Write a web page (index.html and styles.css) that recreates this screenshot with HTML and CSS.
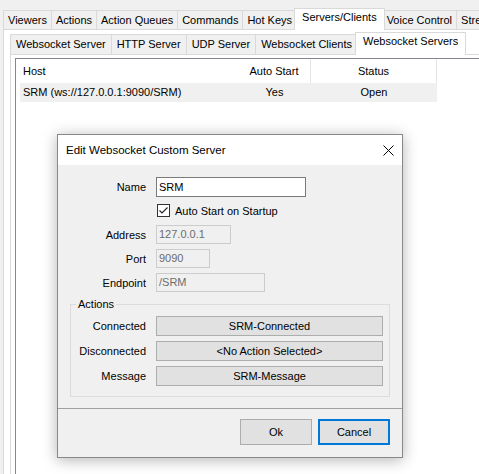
FILE: index.html
```html
<!DOCTYPE html>
<html lang="en">

<head>
    <meta charset="UTF-8">
    <title>Servers/Clients - Websocket Servers</title>
    <link rel="stylesheet" href="styles.css">
</head>

<body>
    <div class="app">
        <div class="tab-strip main-tabs">
            <div class="tab">Viewers</div>
            <div class="tab">Actions</div>
            <div class="tab">Action Queues</div>
            <div class="tab">Commands</div>
            <div class="tab">Hot Keys</div>
            <div class="tab active">Servers/Clients</div>
            <div class="tab">Voice Control</div>
            <div class="tab">Stream Apps</div>
        </div>
        <div class="main-page">
            <div class="tab-strip sub-tabs">
                <div class="tab">Websocket Server</div>
                <div class="tab">HTTP Server</div>
                <div class="tab">UDP Server</div>
                <div class="tab">Websocket Clients</div>
                <div class="tab active">Websocket Servers</div>
            </div>
            <div class="sub-page">
                <div class="list-view">
                    <div class="list-header">
                        <div class="col col-host">Host</div>
                        <div class="col col-auto">Auto Start</div>
                        <div class="col col-status">Status</div>
                    </div>
                    <div class="list-row">
                        <div class="col col-host">SRM (ws://127.0.0.1:9090/SRM)</div>
                        <div class="col col-auto">Yes</div>
                        <div class="col col-status">Open</div>
                    </div>
                </div>
            </div>
        </div>

        <!-- modal dialog -->
        <div class="dialog">
            <div class="dialog-title">
                <span>Edit Websocket Custom Server</span>
                <svg class="close-icon" width="11" height="11" viewBox="0 0 11 11">
                    <path d="M0.5 0.5 L10.5 10.5 M10.5 0.5 L0.5 10.5" stroke="#000" stroke-width="1" fill="none" />
                </svg>
            </div>
            <div class="dialog-body">
                <div class="form-row">
                    <span class="form-label">Name</span>
                    <div class="textbox name-box">SRM</div>
                </div>
                <div class="form-row check-row">
                    <span class="checkbox">
                        <svg width="11" height="11" viewBox="0 0 11 11">
                            <path d="M1.5 5.5 L4 8 L9.5 2.5" stroke="#222" stroke-width="1.1" fill="none" />
                        </svg>
                    </span>
                    <span>Auto Start on Startup</span>
                </div>
                <div class="form-row gap-lg">
                    <span class="form-label">Address</span>
                    <div class="textbox disabled address-box">127.0.0.1</div>
                </div>
                <div class="form-row gap-sm">
                    <span class="form-label">Port</span>
                    <div class="textbox disabled port-box">9090</div>
                </div>
                <div class="form-row gap-sm">
                    <span class="form-label">Endpoint</span>
                    <div class="textbox disabled endpoint-box">/SRM</div>
                </div>
                <fieldset class="group">
                    <legend>Actions</legend>
                    <div class="action-row">
                        <span class="action-label">Connected</span>
                        <div class="action-btn">SRM-Connected</div>
                    </div>
                    <div class="action-row">
                        <span class="action-label">Disconnected</span>
                        <div class="action-btn">&lt;No Action Selected&gt;</div>
                    </div>
                    <div class="action-row">
                        <span class="action-label">Message</span>
                        <div class="action-btn">SRM-Message</div>
                    </div>
                </fieldset>
            </div>
            <div class="dialog-footer">
                <button class="btn">Ok</button>
                <button class="btn btn-default">Cancel</button>
            </div>
        </div>
    </div>
</body>

</html>
```

FILE: styles.css
```css
* {
    box-sizing: border-box;
}

body {
    margin: 0;
    padding: 0;
    background: #f0f0f0;
    font-family: "Liberation Sans", Arial, sans-serif;
    font-size: 11px;
    color: #000;
}

.app {
    position: relative;
    width: 479px;
    height: 474px;
    overflow: hidden;
    display: flex;
    flex-direction: column;
    background: #f0f0f0;
}

/* tabs */
.tab-strip {
    display: flex;
    align-items: flex-end;
    flex: none;
}

.main-tabs {
    height: 29px;
    padding-left: 3px;
}

.sub-tabs {
    height: 24px;
}

.tab {
    flex: none;
    height: 19px;
    line-height: 18px;
    padding: 0 5px;
    margin-right: -1px;
    border: 1px solid #d9d9d9;
    border-bottom: none;
    background: #f0f0f0;
    white-space: nowrap;
}

.main-tabs .tab {
    padding: 0 4px;
}

.sub-tabs .tab {
    height: 20px;
}

.tab.active {
    position: relative;
    z-index: 1;
    height: 22px;
    line-height: 17px;
    padding: 0 7px;
    margin: 0 -3px -1px -2px;
    background: #fff;
}

.main-tabs .tab.active {
    padding: 0 7px;
}

.sub-tabs .tab.active {
    height: 23px;
}

.main-page {
    flex: 1;
    display: flex;
    flex-direction: column;
    margin: 0 -20px -20px 3px;
    padding-left: 6px;
    border: 1px solid #d9d9d9;
    background: #fff;
}

.sub-page {
    flex: 1;
    display: flex;
    flex-direction: column;
    padding: 3px 0 0 4px;
    border: 1px solid #d9d9d9;
    background: #fff;
}

/* list view */
.list-view {
    flex: 1;
    padding-left: 4px;
    border: 1px solid #828790;
    background: #fff;
}

.list-header,
.list-row {
    display: flex;
}

.list-header {
    height: 24px;
    line-height: 24px;
}

.list-row {
    width: 417px;
    height: 19px;
    line-height: 19px;
    background: #f0f0f0;
}

.col {
    white-space: nowrap;
}

.col-host {
    width: 218px;
    padding-left: 3px;
}

.col-auto {
    width: 73px;
    text-align: center;
}

.col-status {
    width: 126px;
    text-align: center;
}

.list-header .col-auto,
.list-header .col-status {
    border-right: 1px solid #e5e5e5;
}

/* dialog */
.dialog {
    position: absolute;
    left: 57px;
    top: 134px;
    width: 346px;
    height: 324px;
    display: flex;
    flex-direction: column;
    border: 1px solid #888;
    background: #f0f0f0;
    box-shadow: 0 2px 14px rgba(0, 0, 0, 0.3);
}

.dialog-title {
    flex: none;
    height: 30px;
    display: flex;
    align-items: center;
    justify-content: space-between;
    padding: 0 8px;
    background: #fff;
    font-size: 11.5px;
}

.dialog-body {
    flex: 1;
    padding-top: 12px;
}

.form-row {
    display: flex;
    align-items: center;
}

.form-label {
    width: 88px;
    margin-right: 10px;
    text-align: right;
}

.textbox {
    height: 20px;
    line-height: 18px;
    padding: 0 2px;
    border: 1px solid #7a7a7a;
    background: #fff;
    white-space: nowrap;
}

.textbox.disabled {
    height: 19px;
    line-height: 17px;
    border-color: #ccc;
    background: #f0f0f0;
    color: #6d6d6d;
}

.name-box {
    width: 150px;
}

.address-box {
    width: 75px;
}

.port-box {
    width: 54px;
}

.endpoint-box {
    width: 109px;
}

.check-row {
    height: 13px;
    margin-top: 7px;
    padding-left: 99px;
}

.checkbox {
    width: 13px;
    height: 13px;
    margin-right: 5px;
    border: 1px solid #333;
    background: #fff;
    display: flex;
}

.gap-lg {
    margin-top: 8px;
}

.gap-sm {
    margin-top: 5px;
}

.group {
    width: 320px;
    min-width: 0;
    margin: 5px 0 0 12px;
    padding: 5px 5px 10px 0;
    border: 1px solid #dcdcdc;
}

.group legend {
    margin-left: 5px;
    padding: 0 2px;
    line-height: 14px;
}

.action-row {
    display: flex;
    align-items: center;
}

.action-row + .action-row {
    margin-top: 5px;
}

.action-label {
    width: 75px;
    margin-right: 10px;
    text-align: right;
}

.action-btn {
    width: 227px;
    height: 20px;
    line-height: 18px;
    border: 1px solid #adadad;
    background: #e1e1e1;
    text-align: center;
}

.dialog-footer {
    flex: none;
    height: 49px;
    display: flex;
    justify-content: flex-end;
    align-items: flex-start;
    gap: 6px;
    padding: 10px 12px 0 0;
    border-top: 1px solid #a0a0a0;
}

.btn {
    width: 72px;
    height: 26px;
    padding: 0;
    border: 1px solid #adadad;
    background: #e1e1e1;
    font: inherit;
    color: #000;
}

.btn-default {
    border: 2px solid #0078d7;
}
```
